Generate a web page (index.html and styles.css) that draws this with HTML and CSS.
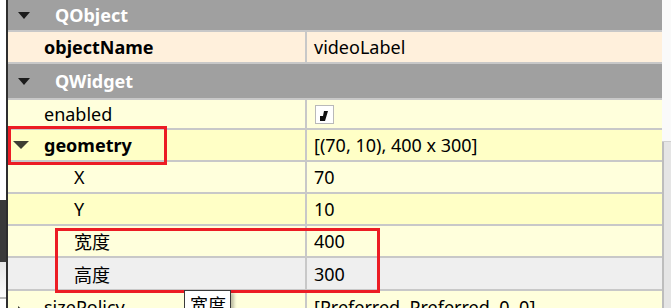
FILE: index.html
```html
<!DOCTYPE html>
<html>
<head>
<meta charset="utf-8">
<link rel="stylesheet" href="styles.css">
</head>
<body>
<div class="screen">
  <div class="edge-left">
    <div class="el-white"></div>
    <div class="el-dark"></div>
    <div class="el-light"></div>
    <div class="el-sep"></div>
    <div class="el-rest"></div>
  </div>
  <div class="edge-line"></div>
  <div class="editor">
    <div class="row header h30">
      <div class="hbranch"><span class="tri-hdr"></span></div>
      <span class="htext">QObject</span>
    </div>
    <div class="row cream h30">
      <div class="label"><div class="branch"></div><span class="bold">objectName</span></div>
      <div class="value">videoLabel</div>
    </div>
    <div class="row header h34">
      <div class="hbranch"><span class="tri-hdr"></span></div>
      <span class="htext">QWidget</span>
    </div>
    <div class="row pale h28">
      <div class="label"><div class="branch"></div><span>enabled</span></div>
      <div class="value">
        <span class="check">
          <svg width="17" height="17" viewBox="0 0 17 17"><polygon points="8,5 12,5 9,15 4,15 4,10 7,10" fill="#111"/></svg>
        </span>
      </div>
    </div>
    <div class="row yellow h30">
      <div class="label"><div class="branch"><span class="tri-open"></span></div><span class="bold">geometry</span></div>
      <div class="value">[(70, 10), 400 x 300]</div>
    </div>
    <div class="row pale h30">
      <div class="label child"><div class="branch"></div><span>X</span></div>
      <div class="value">70</div>
    </div>
    <div class="row yellow h30">
      <div class="label child"><div class="branch"></div><span>Y</span></div>
      <div class="value">10</div>
    </div>
    <div class="row pale h30">
      <div class="label child"><div class="branch"></div><span>宽度</span></div>
      <div class="value">400</div>
    </div>
    <div class="row grey h31">
      <div class="label child"><div class="branch"></div><span>高度</span></div>
      <div class="value">300</div>
    </div>
    <div class="row pale h30 last">
      <div class="label"><div class="branch"><span class="tri-closed"></span></div><span>sizePolicy</span></div>
      <div class="value">[Preferred, Preferred, 0, 0]</div>
    </div>
  </div>
  <div class="edge-right">
    <div class="er-top"></div>
    <div class="er-bottom"></div>
  </div>

  <div class="mark mark-geometry"></div>
  <div class="mark mark-size"></div>
  <div class="tooltip">宽度</div>
</div>
</body>
</html>
```

FILE: styles.css
```css
* { box-sizing: border-box; }
html, body { margin: 0; padding: 0; background: #fff; }
body {
  font-family: "Noto Sans", "Noto Sans CJK SC", sans-serif;
  font-size: 18px;
  color: #000;
}
.screen {
  position: relative;
  width: 671px;
  height: 308px;
  overflow: hidden;
  display: flex;
}
.edge-left {
  width: 6px;
  display: flex;
  flex-direction: column;
}
.el-white { height: 200px; background: #fff; }
.el-dark { height: 62px; background: #3a3a3a; }
.el-light { height: 35px; background: linear-gradient(#e6e6e6, #fbfbfb); }
.el-sep { height: 2px; background: #b8b8b8; }
.el-rest { flex: 1; background: #fff; }
.edge-line { width: 2px; background: #2e2e2e; }
.editor {
  width: 654px;
  display: flex;
  flex-direction: column;
}
.edge-right {
  flex: 1;
  display: flex;
  flex-direction: column;
}
.er-top { height: 142px; background: #fafafa; border-bottom: 1px solid #d0d0d0; }
.er-bottom { flex: 1; background: #e5e5e5; border-left: 2px solid #bdbdbd; }

.row {
  display: flex;
  align-items: stretch;
  border-bottom: 2px solid #c8c8c8;
  flex: none;
}
.h28 { height: 30px; }
.h30 { height: 32px; }
.h31 { height: 33px; }
.h34 { height: 36px; }
.last { border-bottom: none; }

.header {
  background: #a0a0a0;
  align-items: center;
  color: #fff;
  font-weight: bold;
}
.hbranch {
  width: 47px;
  display: flex;
  align-items: center;
  padding-left: 10px;
}
.tri-hdr {
  width: 0; height: 0;
  border-left: 6.5px solid transparent;
  border-right: 6.5px solid transparent;
  border-top: 7px solid #1c1c1c;
}

.cream { background: #fff0dc; }
.pale { background: #ffffdc; }
.yellow { background: #ffffc6; }
.grey { background: #efefef; }

.label {
  width: 299px;
  border-right: 2px solid #c8c8c8;
  display: flex;
  align-items: center;
}
.label.child { padding-left: 30px; }
.branch {
  width: 36px;
  flex: none;
  display: flex;
  align-items: center;
}
.bold { font-weight: bold; }
.value {
  flex: 1;
  display: flex;
  align-items: center;
  padding-left: 7px;
}
.tri-open {
  margin-left: 5px;
  width: 0; height: 0;
  border-left: 8.5px solid transparent;
  border-right: 8.5px solid transparent;
  border-top: 8px solid #3e3e34;
}
.tri-closed {
  margin-left: 10px;
  margin-top: 14px;
  width: 0; height: 0;
  border-top: 8px solid transparent;
  border-bottom: 8px solid transparent;
  border-left: 9px solid #3e3e34;
}
.check {
  width: 19px;
  height: 19px;
  border: 1px solid #b9b9b9;
  background: #fff;
  display: flex;
  align-items: center;
  justify-content: center;
  margin-left: 1px;
}
.check svg { display: block; }

.mark {
  position: absolute;
  border: 3px solid #ec1c24;
}
.mark-geometry { left: 8px; top: 126px; width: 159px; height: 39px; }
.mark-size { left: 55px; top: 228px; width: 325px; height: 65px; }

.tooltip {
  position: absolute;
  left: 184px;
  top: 290px;
  width: 47px;
  height: 30px;
  padding: 1px 0 0 5px;
  background: #fff;
  border: 1px solid #3a3a3a;
  box-shadow: 3px 3px 3px rgba(0,0,0,0.25);
  line-height: 26px;
}
```
